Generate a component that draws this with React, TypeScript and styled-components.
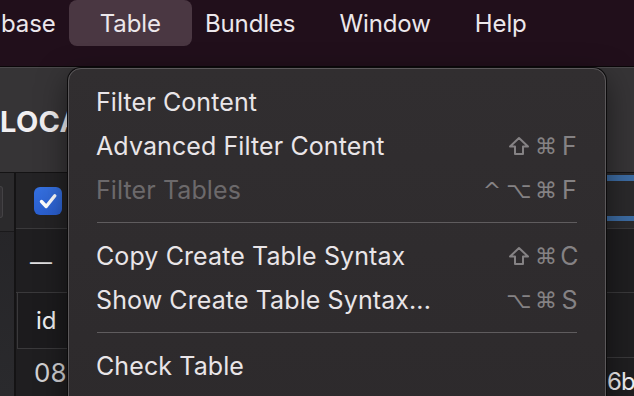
import React from "react";
import styled, { createGlobalStyle } from "styled-components";

const GlobalStyle = createGlobalStyle`
  html, body {
    margin: 0;
    padding: 0;
    width: 634px;
    height: 396px;
    overflow: hidden;
    background: #1f1e20;
    font-family: Inter, "Noto Sans", "Liberation Sans", sans-serif;
  }
`;

const menuBarItems = ["base", "Table", "Bundles", "Window", "Help"];

type MenuEntry =
  | { kind: "item"; label: string; keys?: string[]; disabled?: boolean }
  | { kind: "sep" };

const tableMenu: MenuEntry[] = [
  { kind: "item", label: "Filter Content" },
  { kind: "item", label: "Advanced Filter Content", keys: ["⇧", "⌘", "F"] },
  { kind: "item", label: "Filter Tables", keys: ["^", "⌥", "⌘", "F"], disabled: true },
  { kind: "sep" },
  { kind: "item", label: "Copy Create Table Syntax", keys: ["⇧", "⌘", "C"] },
  { kind: "item", label: "Show Create Table Syntax...", keys: ["⌥", "⌘", "S"] },
  { kind: "sep" },
  { kind: "item", label: "Check Table" },
];

// shift key glyph, drawn as an outlined arrow
const ShiftIcon = () => (
  <svg width="22" height="20" viewBox="0 0 22 20">
    <path
      d="M11 2 L20 10.5 L15 10.5 L15 18 L7 18 L7 10.5 L2 10.5 Z"
      fill="none"
      stroke="currentColor"
      strokeWidth="2"
      strokeLinejoin="round"
    />
  </svg>
);

const App = () => {
  return (
    <Screen>
      <GlobalStyle />
      <MenuBar>
        {menuBarItems.map((item) => (
          <MenuBarItem key={item} $active={item === "Table"}>
            {item}
          </MenuBarItem>
        ))}
      </MenuBar>

      <Window>
        <Toolbar>
          <ToolbarTitle>LOCAL</ToolbarTitle>
        </Toolbar>
        <Content>
          <Sidebar>
            <SidebarTop>
              <SearchField />
            </SidebarTop>
          </Sidebar>
          <Columns>
            <Column $width="52px">
              <Cell $height={56} $bg="#242325">
                <Checkbox>
                  <svg width="28" height="28" viewBox="0 0 28 28">
                    <polyline
                      points="7.5,14.5 12.2,19.5 20.8,8.8"
                      fill="none"
                      stroke="#fff"
                      strokeWidth="3.4"
                      strokeLinecap="round"
                      strokeLinejoin="round"
                    />
                  </svg>
                </Checkbox>
              </Cell>
              <Cell $height={64} $pad={14}>
                <DashText>—</DashText>
              </Cell>
              <Cell $height={56} $pad={18} $boxed>
                <CellText>id</CellText>
              </Cell>
              <Cell $pad={18} $last>
                <CellText $dim>08</CellText>
              </Cell>
            </Column>
            <Column $width="538px" />
            <Column $width="28px">
              <Cell $height={56} $bg="#2a292b">
                <RangeBar />
              </Cell>
              <Cell $height={64} />
              <Cell $height={65} />
              <Cell $pad={1} $last>
                <CellText $tight>6b</CellText>
              </Cell>
            </Column>
          </Columns>
        </Content>
      </Window>

      <Dropdown>
        {tableMenu.map((entry, key) =>
          entry.kind === "sep" ? (
            <Separator key={key} />
          ) : (
            <DropdownItem key={key} $disabled={entry.disabled}>
              <span>{entry.label}</span>
              {entry.keys && (
                <Shortcut>
                  {entry.keys.map((k, i) => (
                    <Key key={i} $letter={/[A-Z]/.test(k)}>
                      {k === "⇧" ? <ShiftIcon /> : k}
                    </Key>
                  ))}
                </Shortcut>
              )}
            </DropdownItem>
          )
        )}
      </Dropdown>
    </Screen>
  );
};

const Screen = styled.div`
  position: relative;
  width: 634px;
  height: 396px;
  overflow: hidden;
  display: flex;
  flex-direction: column;
`;

const MenuBar = styled.div`
  height: 66px;
  flex-shrink: 0;
  display: flex;
  align-items: flex-start;
  padding-left: 1px;
  background: #210f1b;
  border-bottom: 1px solid #0b0709;
`;

const MenuBarItem = styled.div<{ $active?: boolean }>`
  height: 46px;
  display: flex;
  align-items: center;
  padding: ${(p) => (p.$active ? "0 31px" : "0 22px")};
  margin: 0 ${(p) => (p.$active ? "-9px" : "0")};
  border-radius: 8px;
  background: ${(p) => (p.$active ? "#4a3742" : "transparent")};
  color: #ece7eb;
  font-size: 24px;
  letter-spacing: -0.1px;

  &:first-child {
    padding-left: 0;
  }
`;

const Window = styled.div`
  flex: 1;
  display: flex;
  flex-direction: column;
  min-height: 0;
  border-top: 1px solid #4b494b;
`;

const Toolbar = styled.div`
  height: 104px;
  flex-shrink: 0;
  display: flex;
  align-items: center;
  background: #363436;
  border-bottom: 1px solid #141314;
`;

const ToolbarTitle = styled.div`
  margin-top: 2px;
  color: #f1eff1;
  font-size: 29px;
  font-weight: 700;
  letter-spacing: 0.3px;
`;

const Content = styled.div`
  flex: 1;
  display: flex;
  min-height: 0;
`;

const Sidebar = styled.div`
  width: 14px;
  flex-shrink: 0;
  background: linear-gradient(180deg, #252427 0%, #2a2a2d 100%);
  border-right: 2px solid #141314;
`;

const SidebarTop = styled.div`
  height: 58px;
  display: flex;
  align-items: center;
  background: #2b2a2c;
  border-bottom: 1px solid #1a191b;
`;

const SearchField = styled.div`
  width: 2px;
  height: 30px;
  border: 1px solid #444245;
  border-left: none;
  border-radius: 0 6px 6px 0;
  background: #333134;
`;

const Columns = styled.div`
  flex: 1;
  display: flex;
  min-width: 0;
`;

const Column = styled.div<{ $width: string }>`
  width: ${(p) => p.$width};
  flex-shrink: 0;
  display: flex;
  flex-direction: column;
  background: #1f1e20;
  overflow: hidden;
`;

const Cell = styled.div<{
  $height?: number;
  $bg?: string;
  $pad?: number;
  $boxed?: boolean;
  $last?: boolean;
}>`
  ${(p) => (p.$height ? `height: ${p.$height}px;` : "flex: 1;")}
  flex-shrink: 0;
  display: flex;
  align-items: ${(p) => (p.$last ? "flex-start" : "center")};
  padding-left: ${(p) => p.$pad ?? 0}px;
  ${(p) => p.$last && "padding-top: 8px;"}
  background: ${(p) => p.$bg ?? "#1f1e20"};
  border-bottom: ${(p) => (p.$last ? "none" : "1px solid #3a393b")};
  ${(p) => p.$boxed && "border-left: 1px solid #3a393b; margin-left: 1px; background: #1c1b1d;"}
  box-sizing: border-box;
  white-space: nowrap;
`;

const Checkbox = styled.div`
  width: 28px;
  height: 28px;
  margin-left: 18px;
  border-radius: 6px;
  background: linear-gradient(180deg, #3570e0 0%, #2a5fd0 100%);
  display: flex;
`;

const DashText = styled.span`
  color: #e2e1e3;
  font-size: 22px;
  margin-top: 2px;
`;

const CellText = styled.span<{ $dim?: boolean; $tight?: boolean }>`
  color: ${(p) => (p.$dim ? "#d3d2d4" : "#f0eff1")};
  font-size: ${(p) => (p.$dim ? "26px" : "24px")};
  ${(p) => p.$tight && "letter-spacing: -0.8px; margin-top: 1px;"}
`;

const RangeBar = styled.div`
  width: 100%;
  height: 35px;
  margin-top: -6px;
  border-top: 6px solid #3c6ba2;
  border-bottom: 5px solid #3c6ba2;
  background: #2a292b;
`;

const Dropdown = styled.div`
  position: absolute;
  left: 68px;
  top: 68px;
  width: 538px;
  height: 360px;
  box-sizing: border-box;
  padding: 11px 0;
  background: linear-gradient(180deg, #312e30 0%, #2d2a2c 100%);
  border: 1px solid #5b585a;
  border-radius: 13px;
  box-shadow: 0 0 0 1px #0c0b0c, 0 10px 30px rgba(0, 0, 0, 0.5);
`;

const DropdownItem = styled.div<{ $disabled?: boolean }>`
  height: 44px;
  display: flex;
  align-items: center;
  justify-content: space-between;
  padding: 0 28px 0 27px;
  color: ${(p) => (p.$disabled ? "#6c696b" : "#e9e5e8")};
  font-size: 25px;
  letter-spacing: 0.1px;
  white-space: nowrap;
`;

const Shortcut = styled.span`
  display: flex;
  align-items: center;
  gap: 5px;
  color: #858284;
`;

const Key = styled.span<{ $letter?: boolean }>`
  display: inline-flex;
  justify-content: center;
  align-items: center;
  width: ${(p) => (p.$letter ? "15px" : "22px")};
  font-family: ${(p) => (p.$letter ? "Inter, sans-serif" : '"DejaVu Sans", sans-serif')};
  font-size: ${(p) => (p.$letter ? "25px" : "22px")};
`;

const Separator = styled.div`
  height: 1px;
  margin: 10px 28px 11px 28px;
  background: #5f5c5e;
`;

export default App;
